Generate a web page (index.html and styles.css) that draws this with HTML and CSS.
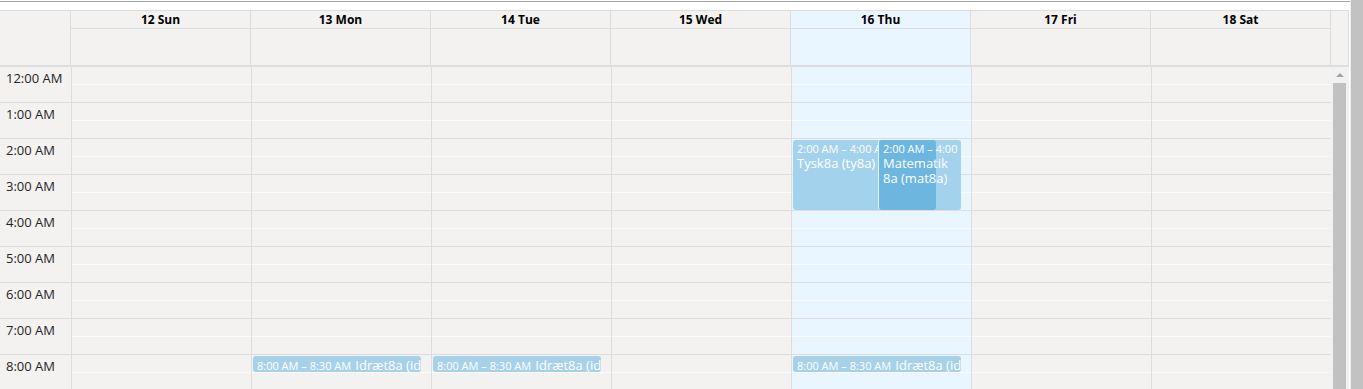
FILE: index.html
```html
<!DOCTYPE html>
<html lang="en">
<head>
    <meta charset="UTF-8">
    <title>Week</title>
    <link rel="stylesheet" href="styles.css">
</head>
<body>
    <div class="window">
        <div class="main">
            <div class="calendar">
                <!-- header -->
                <div class="head">
                    <div class="head-gutter"></div>
                    <div class="head-day"><div class="day-name">12 Sun</div><div class="all-day"></div></div>
                    <div class="head-day"><div class="day-name">13 Mon</div><div class="all-day"></div></div>
                    <div class="head-day"><div class="day-name">14 Tue</div><div class="all-day"></div></div>
                    <div class="head-day"><div class="day-name">15 Wed</div><div class="all-day"></div></div>
                    <div class="head-day today"><div class="day-name">16 Thu</div><div class="all-day"></div></div>
                    <div class="head-day"><div class="day-name">17 Fri</div><div class="all-day"></div></div>
                    <div class="head-day"><div class="day-name">18 Sat</div><div class="all-day"></div></div>
                    <div class="head-end"></div>
                </div>

                <!-- time grid -->
                <div class="grid">
                    <div class="gutter">
                        <div class="hour">12:00 AM</div>
                        <div class="hour">1:00 AM</div>
                        <div class="hour">2:00 AM</div>
                        <div class="hour">3:00 AM</div>
                        <div class="hour">4:00 AM</div>
                        <div class="hour">5:00 AM</div>
                        <div class="hour">6:00 AM</div>
                        <div class="hour">7:00 AM</div>
                        <div class="hour">8:00 AM</div>
                        <div class="hour">9:00 AM</div>
                    </div>
                    <div class="col"></div>
                    <div class="col">
                        <div class="event short" style="top: 289px;">
                            <span class="ev-time">8:00 AM – 8:30 AM</span> <span class="ev-title">Idræt8a (idr8a)</span>
                        </div>
                    </div>
                    <div class="col">
                        <div class="event short" style="top: 289px;">
                            <span class="ev-time">8:00 AM – 8:30 AM</span> <span class="ev-title">Idræt8a (idr8a)</span>
                        </div>
                    </div>
                    <div class="col"></div>
                    <div class="col today">
                        <div class="event" style="top: 73px; height: 70px;">
                            <div class="ev-time">2:00 AM – 4:00 AM</div>
                            <div class="ev-title">Tysk8a (ty8a)</div>
                        </div>
                        <div class="event inset" style="top: 73px; height: 70px;">
                            <div class="ev-time">2:00 AM – 4:00</div>
                            <div class="ev-title"><span class="nw">Matematik</span> <span class="nw">8a (mat8a)</span></div>
                        </div>
                        <div class="event short" style="top: 289px;">
                            <span class="ev-time">8:00 AM – 8:30 AM</span> <span class="ev-title">Idræt8a (idr8a)</span>
                        </div>
                    </div>
                    <div class="col"></div>
                    <div class="col"></div>
                    <div class="vscroll">
                        <div class="arrow"></div>
                        <div class="thumb"></div>
                    </div>
                </div>
            </div>
        </div>
        <div class="outer-bar"></div>
    </div>
</body>
</html>
```

FILE: styles.css
```css
* {
    box-sizing: border-box;
    margin: 0;
    padding: 0;
}

body {
    font-family: "Open Sans", "Noto Sans", sans-serif;
    background: white;
    height: 389px;
    overflow: hidden;
}

.window {
    display: flex;
    height: 389px;
}

/* main area */
.main {
    width: 1350px;
    padding-top: 1px;
}

.calendar {
    border-top: 1px solid #a3a3a3;
    padding-top: 8px;
    padding-right: 1px;
}

.outer-bar {
    flex: 1;
    background: #c2c2c2;
    border-left: 1px solid #ececec;
}

/* header */
.head {
    display: flex;
    background: #f3f2f1;
    border-top: 1px solid #dddddd;
    border-bottom: 2px solid #dddddd;
    border-right: 1px solid #dddddd;
}

.head-gutter {
    width: 70px;
}

.head-day {
    width: 180px;
    border-left: 1px solid #dddddd;
}

.head-day.today {
    background: #eaf6ff;
}

.day-name {
    height: 18px;
    border-bottom: 1px solid #dddddd;
    font-size: 12px;
    font-weight: bold;
    line-height: 17px;
    text-align: center;
    color: #000;
}

.all-day {
    height: 36px;
}

.head-end {
    flex: 1;
    border-left: 1px solid #dddddd;
}

/* time grid */
.grid {
    display: flex;
    height: 330px;
    background: #f3f2f1;
    overflow: hidden;
}

.gutter {
    width: 71px;
}

.hour {
    height: 36px;
    border-bottom: 1px solid #dddddd;
    padding: 2px 0 0 6px;
    font-size: 13px;
    color: #252423;
}

.col {
    position: relative;
    width: 180px;
    border-left: 1px solid #dddddd;
    background-image: repeating-linear-gradient(to bottom,
        transparent 0 17px,
        #fafafa 17px 18px,
        transparent 18px 35px,
        #dddddd 35px 36px);
}

.col.today {
    background-color: #eaf6ff;
}

/* events */
.event {
    position: absolute;
    left: 1px;
    right: 10px;
    background: #a3d2ec;
    border-radius: 3px;
    color: white;
    padding: 2px 4px;
    overflow: hidden;
}

.event.inset {
    left: 86px;
    right: auto;
    width: 58px;
    background: #6db6df;
    border-left: 1px solid #e8f4fb;
    padding: 2px 4px;
    overflow: visible;
    z-index: 2;
}

.nw {
    white-space: nowrap;
}

.event.short {
    height: 16px;
    padding: 0 4px;
    white-space: nowrap;
    line-height: 16px;
    background: #a6d1e8;
}

.ev-time {
    font-size: 11px;
    line-height: 14px;
    white-space: nowrap;
}

.ev-title {
    font-size: 13px;
    line-height: 15px;
}

/* inner scrollbar */
.vscroll {
    flex: 1;
    background: #f1f1f1;
    padding-left: 2px;
    padding-right: 3px;
}

.arrow {
    width: 0;
    height: 0;
    margin: 6px auto 6px;
    border-left: 4px solid transparent;
    border-right: 4px solid transparent;
    border-bottom: 4px solid #a3a3a3;
}

.thumb {
    height: 320px;
    background: #c1c1c1;
}
```
